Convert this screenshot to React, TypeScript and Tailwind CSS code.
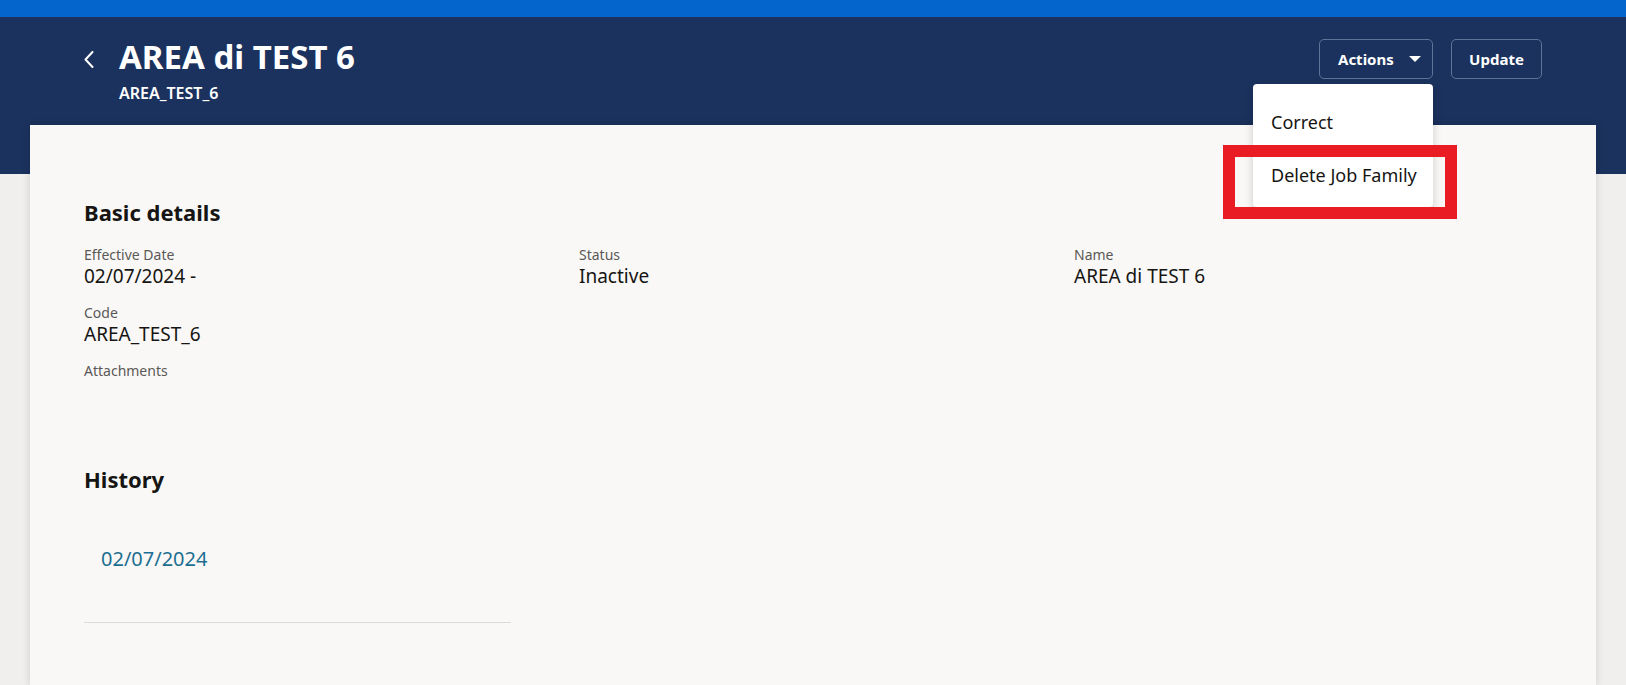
import React from "react";

type Field = { label: string; value?: string };

const fields: Field[] = [
  { label: "Effective Date", value: "02/07/2024 -" },
  { label: "Status", value: "Inactive" },
  { label: "Name", value: "AREA di TEST 6" },
  { label: "Code", value: "AREA_TEST_6" },
];

const DetailField: React.FC<Field> = ({ label, value }) => (
  <div>
    <p className="text-[14px] leading-[18px] text-[#5b5956]">{label}</p>
    {value && (
      <p className="text-[19px] leading-[24px] text-[#161513]">{value}</p>
    )}
  </div>
);

export default function App() {
  return (
    <div
      className="h-[685px] bg-[#f1efed] overflow-hidden"
      style={{ fontFamily: '"Noto Sans", "Open Sans", sans-serif' }}
    >
      {/* Brand strip */}
      <div className="h-[17px] bg-[#0465cc]" />

      {/* Page header */}
      <header className="h-[157px] bg-[#1b325e] px-[84px] pt-[21px] flex justify-between">
        <div className="flex">
          <button
            type="button"
            aria-label="Back"
            className="h-[38px] mr-[25px] pt-[13px] flex items-start text-white"
          >
            <svg className="block" width="10" height="17" viewBox="0 0 10 17" fill="none">
              <polyline
                points="8.5,1 1.5,8.5 8.5,16"
                stroke="currentColor"
                strokeWidth="2"
                strokeLinecap="round"
                strokeLinejoin="round"
              />
            </svg>
          </button>
          <div>
            <h1 className="text-[33px] leading-[38px] font-bold text-white">
              AREA di TEST 6
            </h1>
            <p className="mt-[7px] text-[16px] leading-[20px] font-semibold text-white">
              AREA_TEST_6
            </p>
          </div>
        </div>

        <div className="flex gap-[18px] pt-[1px]">
          <div className="relative">
            <button
              type="button"
              className="h-[40px] w-[114px] rounded-[5px] border border-[#5f7399] flex items-center pl-[18px] gap-[15px] text-white text-[15px] font-bold"
            >
              Actions
              <span className="w-0 h-0 border-l-[6px] border-r-[6px] border-t-[6px] border-l-transparent border-r-transparent border-t-white" />
            </button>

            {/* Open menu */}
            <div className="absolute right-0 top-[45px] z-20 w-[180px] rounded-[4px] bg-white pt-[12px] pb-[5px] shadow-[0_4px_10px_rgba(0,0,0,0.18)]">
              <div className="h-[53px] leading-[53px] px-[18px] text-[18px] text-[#161513]">
                Correct
              </div>
              <div className="h-[53px] leading-[53px] px-[18px] text-[18px] text-[#161513] whitespace-nowrap">
                Delete Job Family
              </div>
            </div>

            {/* Highlight mark */}
            <div className="absolute left-[-96px] top-[106px] z-30 w-[234px] h-[74px] border-[12px] border-[#e81c22] pointer-events-none" />
          </div>

          <button
            type="button"
            className="h-[40px] w-[91px] rounded-[5px] border border-[#5f7399] text-white text-[15px] font-bold"
          >
            Update
          </button>
        </div>
      </header>

      {/* Content card */}
      <main className="relative mx-[30px] -mt-[49px] min-h-[560px] bg-[#f9f8f6] pl-[54px] pr-[27px] pt-[73px] shadow-[0_0_8px_rgba(0,0,0,0.14)]">
        <h2 className="text-[22px] leading-[28px] font-bold text-[#161513]">
          Basic details
        </h2>

        <div className="mt-[20px] grid grid-cols-3 gap-y-[16px]">
          {fields.map((f) => (
            <DetailField key={f.label} {...f} />
          ))}
          <div className="col-span-3">
            <DetailField label="Attachments" />
          </div>
        </div>

        <h2 className="mt-[85px] text-[22px] leading-[28px] font-bold text-[#161513]">
          History
        </h2>

        <div className="w-[427px] border-b border-[#dcdbd9] pt-[54px] pb-[50px] pl-[17px]">
          <a className="text-[20px] leading-[24px] text-[#1d6f91] cursor-pointer">
            02/07/2024
          </a>
        </div>
      </main>
    </div>
  );
}
